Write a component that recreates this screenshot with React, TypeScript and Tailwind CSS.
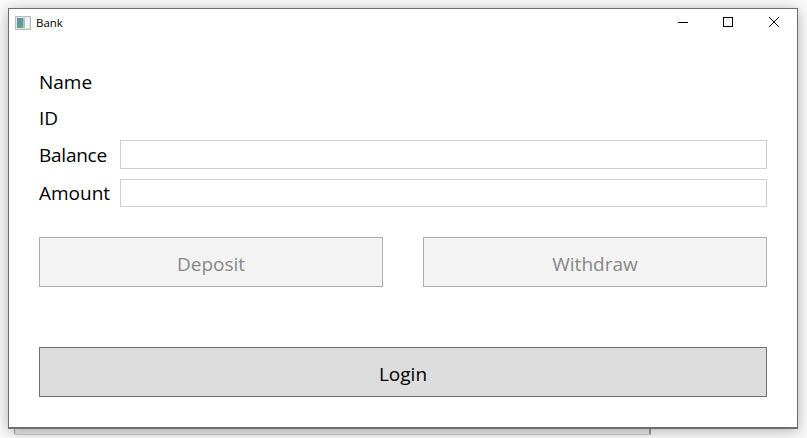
import React from "react";

const font = { fontFamily: '"Open Sans", "Noto Sans", sans-serif' };

function AppIcon() {
  return (
    <svg width="16" height="14" viewBox="0 0 16 14">
      <defs>
        <linearGradient id="pane" x1="0" y1="0" x2="0" y2="1">
          <stop offset="0" stopColor="#5f8fb0" />
          <stop offset="1" stopColor="#5fa585" />
        </linearGradient>
      </defs>
      <rect x="0.5" y="0.5" width="15" height="13" fill="#dfe3e3" stroke="#b9bcbc" />
      <rect x="2" y="2" width="6" height="10" fill="url(#pane)" />
      <rect x="8" y="2" width="2" height="10" fill="#a9c4bc" />
      <rect x="10" y="2" width="4" height="10" fill="#f4f6f6" />
    </svg>
  );
}

function WindowControls() {
  return (
    <div className="flex items-center text-black">
      <div className="w-[46px] h-[25px] flex items-center justify-center pl-[2px]">
        <svg width="10" height="10" viewBox="0 0 10 10"><path d="M0 5.5H10" stroke="#000" fill="none" /></svg>
      </div>
      <div className="w-[46px] h-[25px] flex items-center justify-center">
        <svg width="10" height="10" viewBox="0 0 10 10"><rect x="0.5" y="0.5" width="9" height="9" stroke="#000" fill="none" /></svg>
      </div>
      <div className="w-[46px] h-[25px] flex items-center justify-center">
        <svg width="10" height="10" viewBox="0 0 10 10"><path d="M0 0L10 10M10 0L0 10" stroke="#000" fill="none" /></svg>
      </div>
    </div>
  );
}

function Row({ label, field, height, labelClass = "" }: { label: string; field?: boolean; height: string; labelClass?: string }) {
  return (
    <div className={`flex items-center ${height}`}>
      <span className={`w-[81px] text-[19px] text-black leading-none ${labelClass}`}>{label}</span>
      {field && <div className="flex-1 h-full border border-[#cfcfcf] bg-white" />}
    </div>
  );
}

export default function App() {
  return (
    <div className="relative w-[807px] h-[438px] bg-[#fbfbfb] overflow-hidden pl-2 pt-2" style={font}>
      <div className="absolute left-[14px] top-[420px] w-[637px] h-[15px] rounded-bl-[3px] border-l border-b border-r-2 border-l-[#9a9a9a] border-b-[#cdcdcd] border-r-[#9a9a9a] bg-[#ececec]" />
      <div className="relative w-[790px] h-[421px] bg-white border border-[#6e6e6e] border-b-2 shadow-[0_2px_14px_rgba(0,0,0,0.3)] flex flex-col">
        <div className="flex items-start justify-between h-[29px] pl-[6px]">
          <div className="flex items-center gap-[5px] h-[26px] pt-px">
            <AppIcon />
            <span className="text-[11.5px] text-black pt-px">Bank</span>
          </div>
          <WindowControls />
        </div>
        <div className="flex-1 flex flex-col px-[30px] pt-[30px]">
          <div className="flex flex-col">
            <div className="mb-[8px]"><Row label="Name" height="h-[28px]" /></div>
            <div className="mb-[8px]"><Row label="ID" height="h-[28px]" /></div>
            <div className="mb-[10px]"><Row label="Balance" field height="h-[29px]" labelClass="pt-[2px] tracking-[-0.25px]" /></div>
            <Row label="Amount" field height="h-[28px]" />
          </div>
          <div className="flex justify-between mt-[30px]">
            <button className="w-[344px] h-[50px] pt-1 bg-[#f3f3f3] border border-[#adadad] text-[#888888] text-[19px]">Deposit</button>
            <button className="w-[344px] h-[50px] pt-1 bg-[#f3f3f3] border border-[#adadad] text-[#888888] text-[19px]">Withdraw</button>
          </div>
          <button className="mt-[60px] w-full h-[50px] pt-1 bg-[#dddddd] border border-[#707070] text-black text-[19px]">Login</button>
        </div>
      </div>
    </div>
  );
}
